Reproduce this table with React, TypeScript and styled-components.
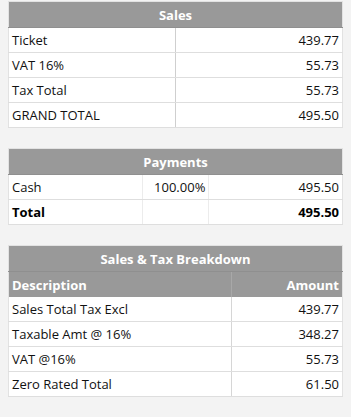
import React from "react";
import styled, { createGlobalStyle } from "styled-components";

const Global = createGlobalStyle`
  html, body { margin: 0; padding: 0; background: #f3f3f3; }
  body { font-family: "Open Sans", "Noto Sans", sans-serif; font-size: 13px; color: #111; }
`;

const Page = styled.div`
  display: flex;
  flex-direction: column;
  gap: 20px;
  padding: 1px 8px 0 8px;
`;

const Table = styled.table`
  width: 100%;
  border-collapse: collapse;
  table-layout: fixed;
  background: #fff;
  border: 1px solid #e2e2e2;
`;

const TitleCell = styled.th`
  background: #999999;
  color: #fff;
  font-weight: 700;
  text-align: center;
  height: 25px;
  padding: 0;
  border-bottom: 1px solid #8f8f8f;
`;

const HeadCell = styled.th<{ $align?: string; $divider?: boolean }>`
  background: #999999;
  color: #fff;
  font-weight: 700;
  text-align: ${(p) => p.$align || "left"};
  height: 25px;
  padding: 0 3px;
  border-right: ${(p) => (p.$divider ? "1px solid #a8a8a8" : "none")};
`;

const Cell = styled.td<{ $align?: string; $divider?: string; $bold?: boolean }>`
  height: 24px;
  padding: 0 3px;
  text-align: ${(p) => p.$align || "left"};
  font-weight: ${(p) => (p.$bold ? 700 : 400)};
  color: ${(p) => (p.$bold ? "#000" : "#111")};
  border-bottom: 1px solid #dedede;
  border-right: ${(p) => (p.$divider ? `1px solid ${p.$divider}` : "none")};
  white-space: nowrap;
`;

const sales = [
  ["Ticket", "439.77"],
  ["VAT 16%", "55.73"],
  ["Tax Total", "55.73"],
  ["GRAND TOTAL", "495.50"],
];

const breakdown = [
  ["Sales Total Tax Excl", "439.77"],
  ["Taxable Amt @ 16%", "348.27"],
  ["VAT @16%", "55.73"],
  ["Zero Rated Total", "61.50"],
];

export default function App() {
  return (
    <>
      <Global />
      <Page>
        <Table>
          <colgroup>
            <col style={{ width: "50%" }} />
            <col style={{ width: "50%" }} />
          </colgroup>
          <thead>
            <tr>
              <TitleCell colSpan={2}>Sales</TitleCell>
            </tr>
          </thead>
          <tbody>
            {sales.map(([k, v]) => (
              <tr key={k}>
                <Cell $divider="#cfcfcf">{k}</Cell>
                <Cell $align="right">{v}</Cell>
              </tr>
            ))}
          </tbody>
        </Table>

        <Table>
          <colgroup>
            <col style={{ width: "40%" }} />
            <col style={{ width: "20%" }} />
            <col style={{ width: "40%" }} />
          </colgroup>
          <thead>
            <tr>
              <TitleCell colSpan={3}>Payments</TitleCell>
            </tr>
          </thead>
          <tbody>
            <tr>
              <Cell $divider="#ececec">Cash</Cell>
              <Cell $align="right" $divider="#ececec">100.00%</Cell>
              <Cell $align="right">495.50</Cell>
            </tr>
            <tr>
              <Cell $bold $divider="#ececec">Total</Cell>
              <Cell $divider="#ececec"></Cell>
              <Cell $bold $align="right">495.50</Cell>
            </tr>
          </tbody>
        </Table>

        <Table>
          <colgroup>
            <col style={{ width: "66.8%" }} />
            <col style={{ width: "33.2%" }} />
          </colgroup>
          <thead>
            <tr>
              <TitleCell colSpan={2}>Sales &amp; Tax Breakdown</TitleCell>
            </tr>
            <tr>
              <HeadCell $divider>Description</HeadCell>
              <HeadCell $align="right">Amount</HeadCell>
            </tr>
          </thead>
          <tbody>
            {breakdown.map(([k, v]) => (
              <tr key={k}>
                <Cell $divider="#d6d6d6">{k}</Cell>
                <Cell $align="right">{v}</Cell>
              </tr>
            ))}
          </tbody>
        </Table>
      </Page>
    </>
  );
}
